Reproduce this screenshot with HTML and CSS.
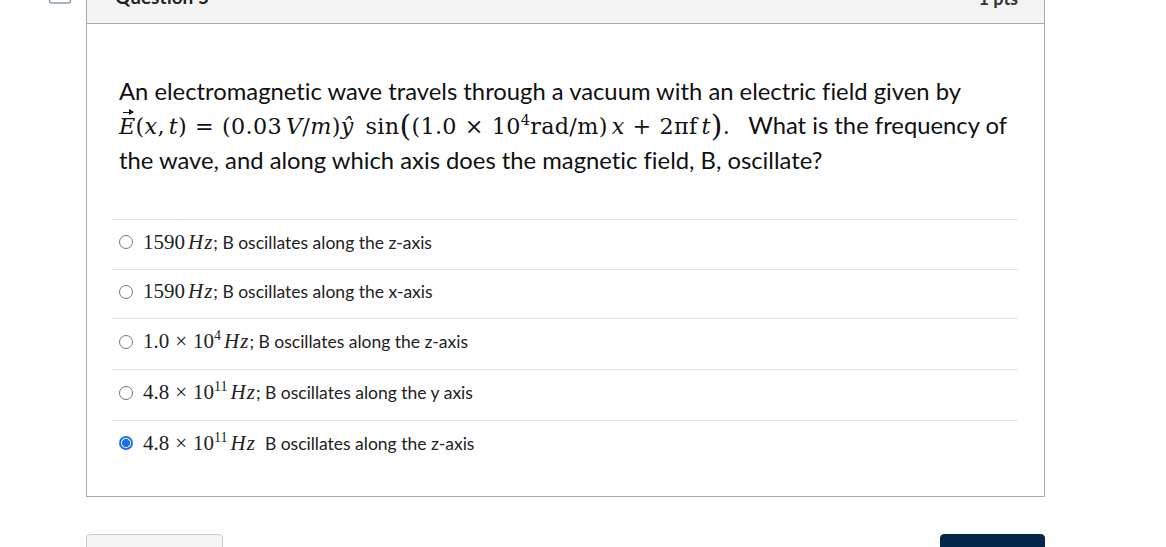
FILE: index.html
```html
<!DOCTYPE html>
<html>
<head>
<meta charset="utf-8">
<link rel="stylesheet" href="styles.css">
</head>
<body>
<div class="page">
  <div class="gutter">
    <svg class="flag" width="24" height="30" viewBox="0 0 24 30"><rect x="1.5" y="1" width="21" height="26" rx="2" fill="none" stroke="#8a9bb0" stroke-width="1.5"/></svg>
  </div>
  <div class="main">
    <div class="card">
      <div class="card-header">
        <span class="q-name">Question 5</span>
        <span class="q-pts">1 pts</span>
      </div>
      <div class="card-body">
        <p class="q-text">An electromagnetic wave travels through a vacuum with an electric field given by<br><span class="m"><span class="vec mi">E</span>(<span class="mi">x</span>,<span class="thin"></span><span class="mi">t</span>)<span class="op">=</span>(0.03<span class="thin"></span><span class="mi">V</span>/<span class="mi">m</span>)<span class="mi">ŷ</span><span class="sp"></span>sin<span class="big">(</span>(1.0<span class="op">×</span>10<sup>4</sup>rad/m)<span class="thin"></span><span class="mi">x</span><span class="op">+</span>2πf<span class="thin"></span><span class="mi">t</span><span class="big">)</span>.</span>&nbsp;&nbsp; What is the frequency of<br>the wave, and along which axis does the magnetic field, B, oscillate?</p>
        <ul class="answers">
          <li class="answer"><span class="radio"></span><span class="km">1590<span class="ki">Hz</span></span>; B oscillates along the z-axis</li>
          <li class="answer"><span class="radio"></span><span class="km">1590<span class="ki">Hz</span></span>; B oscillates along the x-axis</li>
          <li class="answer tall"><span class="radio"></span><span class="km">1.0<span class="times">×</span>10<sup>4</sup><span class="ki">Hz</span></span>; B oscillates along the z-axis</li>
          <li class="answer tall"><span class="radio"></span><span class="km">4.8<span class="times">×</span>10<sup>11</sup><span class="ki">Hz</span></span>; B oscillates along the y axis</li>
          <li class="answer"><span class="radio checked"></span><span class="km">4.8<span class="times">×</span>10<sup>11</sup><span class="ki">Hz</span></span>&nbsp; B oscillates along the z-axis</li>
        </ul>
      </div>
    </div>
    <div class="nav">
      <button class="btn btn-prev"></button>
      <button class="btn btn-next"></button>
    </div>
  </div>
</div>
</body>
</html>
```
FILE: styles.css
```css
html, body {
  margin: 0;
  padding: 0;
  background: #fff;
  overflow: hidden;
}
.page {
  display: flex;
  margin-top: -24px;
  font-family: Lato, "Liberation Sans", sans-serif;
  color: #222;
}
.gutter {
  width: 86px;
  flex: none;
}
.flag {
  margin-left: 48px;
  display: block;
}
.main {
  width: 959px;
  flex: none;
}
.card {
  border: 1px solid #aaaaaa;
}
.card-header {
  height: 47px;
  background: #f3f3f3;
  border-bottom: 1px solid #aaaaaa;
  display: flex;
  align-items: flex-end;
  justify-content: space-between;
  padding: 0 26px 0 28px;
  box-sizing: border-box;
}
.q-name {
  font-weight: 700;
  font-size: 19px;
  line-height: 20px;
  margin-bottom: 16px;
  color: #222;
}
.q-pts {
  font-weight: 700;
  font-size: 18px;
  color: #333;
  line-height: 18px;
  margin-bottom: 16px;
}
.card-body {
  padding: 50px 26px 26px 25px;
}
.q-text {
  margin: 0 0 42px 7px;
  font-family: Lato, "Liberation Sans", sans-serif;
  font-variant-ligatures: none;
  font-size: 23.8px;
  line-height: 34px;
  color: #111;
}
.m {
  font-family: "DejaVu Serif", "Liberation Serif", serif;
  font-size: 22.3px;
  letter-spacing: 0.3px;
}
.mi {
  font-style: italic;
}
.op {
  padding: 0 8px;
}
.thin {
  display: inline-block;
  width: 4px;
}
.sp {
  display: inline-block;
  width: 12px;
}
.vec {
  position: relative;
}
.vec::before {
  content: "";
  position: absolute;
  left: 4px;
  top: -1px;
  width: 10px;
  height: 1.2px;
  background: #111;
}
.vec::after {
  content: "";
  position: absolute;
  left: 10px;
  top: -4px;
  border-left: 5px solid #111;
  border-top: 3px solid transparent;
  border-bottom: 3px solid transparent;
}
.big {
  font-size: 30px;
  line-height: 20px;
  vertical-align: -2px;
}
.m sup {
  font-size: 14.5px;
  line-height: 0;
  vertical-align: 9px;
}
.answers {
  list-style: none;
  margin: 0;
  padding: 0;
}
.answer {
  border-top: 1px solid #e1e1e1;
  height: 50px;
  display: flex;
  align-items: center;
  padding-left: 7px;
  padding-bottom: 5px;
  font-size: 17.5px;
  color: #222;
  white-space: pre;
  box-sizing: border-box;
}
.answer:nth-child(2) {
  height: 49px;
}
.answer.tall {
  height: 51px;
}
.radio {
  border: 1.3px solid #767676;
  border-radius: 50%;
  margin-right: 10px;
  flex: none;
  box-sizing: border-box;
  width: 14px;
  height: 14px;
}
.radio.checked {
  border: 2px solid #1a73e8;
  background: radial-gradient(circle, #1a73e8 0 3.8px, #fff 4.3px);
}
.km {
  font-family: "Liberation Serif", "DejaVu Serif", serif;
  font-size: 21px;
}
.ki {
  font-style: italic;
  margin-left: 3px;
  letter-spacing: 1px;
}
.times {
  padding: 0 6px;
}
.km sup {
  font-size: 14px;
  line-height: 0;
  vertical-align: 8px;
}
.nav {
  display: flex;
  justify-content: space-between;
  margin-top: 37px;
}
.btn {
  height: 40px;
  border-radius: 4px;
  padding: 0;
}
.btn-prev {
  width: 137px;
  background: #f5f5f5;
  border: 1px solid #c7cdd1;
}
.btn-next {
  width: 105px;
  background: #03264a;
  border: 1px solid #03264a;
}
```
